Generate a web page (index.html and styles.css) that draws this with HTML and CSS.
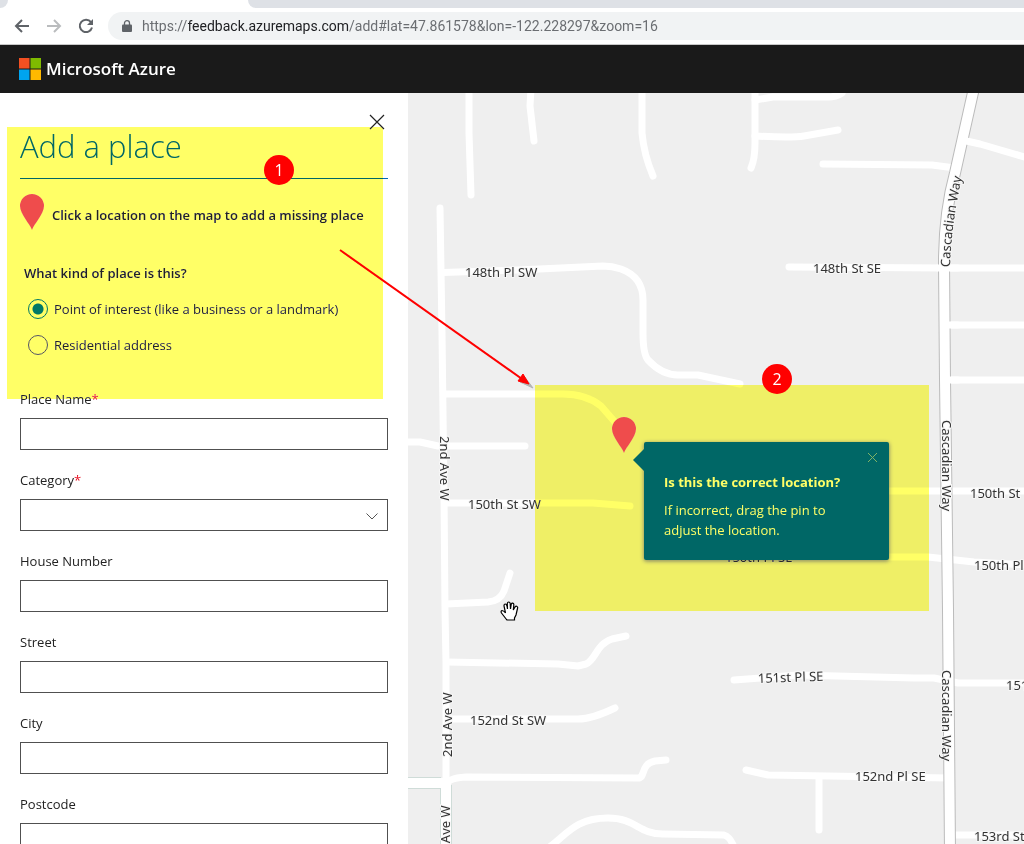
FILE: index.html
```
<!DOCTYPE html>
<html lang="en">
<head>
<meta charset="UTF-8">
<meta name="viewport" content="width=device-width, initial-scale=1.0">
<title>Azure Maps Feedback</title>
<link rel="stylesheet" href="styles.css">
</head>
<body>

<div class="browser">
    <div class="tabstrip">
        <span class="tab-before"></span>
        <span class="tab-current"></span>
        <span class="tab-after"></span>
    </div>
    <div class="toolbar">
        <button class="nav-button" aria-label="Back">
            <svg width="16" height="16" viewBox="0 0 16 16"><path d="M15 8H2M8 2L2 8l6 6"/></svg>
        </button>
        <button class="nav-button disabled" aria-label="Forward">
            <svg width="16" height="16" viewBox="0 0 16 16"><path d="M1 8h13M8 2l6 6-6 6"/></svg>
        </button>
        <button class="nav-button" aria-label="Reload">
            <svg width="16" height="16" viewBox="0 0 16 16"><path d="M13 4.200A6.200 6.200 0 1 0 14 9.500"/><path class="solid" d="M15 1v6H9z"/></svg>
        </button>
        <div class="address">
            <svg width="10" height="12" viewBox="0 0 10 12"><path d="M1 4.500h8q1 0 1 1V11q0 1-1 1H1q-1 0-1-1V5.500q0-1 1-1z" fill="#5f6368"/><path d="M2.500 5V3a2.500 2.300 0 0 1 5 0v2" fill="none" stroke="#5f6368" stroke-width="1.300"/></svg>
            <span class="url">https://<b>feedback.azuremaps.com</b>/add#lat=47.861578&amp;lon=-122.228297&amp;zoom=16</span>
        </div>
    </div>
</div>

<header class="brand">
    <svg width="22" height="22" viewBox="0 0 22 22">
        <rect width="10.500" height="10.500" fill="#f25022"/>
        <rect x="11.500" width="10.500" height="10.500" fill="#7fba00"/>
        <rect y="11.500" width="10.500" height="10.500" fill="#00a4ef"/>
        <rect x="11.500" y="11.500" width="10.500" height="10.500" fill="#ffb900"/>
    </svg>
    <span>Microsoft Azure</span>
</header>

<main class="content">
    <form class="panel">
        <button type="button" class="panel-close" aria-label="Close">
            <svg width="16" height="16" viewBox="0 0 16 16"><path d="M1 1l14 14M15 1L1 15" stroke="#222" stroke-width="1.200"/></svg>
        </button>
        <h1>Add a place</h1>

        <div class="hint">
            <svg width="24" height="36" viewBox="0 0 24 36"><path d="M12 36C10 30 0 20 0 12a12 12 0 0 1 24 0C24 20 14 30 12 36z" fill="#ef4c4c"/></svg>
            <span>Click a location on the map to add a missing place</span>
        </div>

        <fieldset class="kind">
            <legend>What kind of place is this?</legend>
            <label><input type="radio" name="kind" checked><span>Point of interest (like a business or a landmark)</span></label>
            <label><input type="radio" name="kind"><span>Residential address</span></label>
        </fieldset>

        <div class="field">
            <label for="name">Place Name<em>*</em></label>
            <input type="text" id="name">
        </div>
        <div class="field">
            <label for="category">Category<em>*</em></label>
            <div class="select">
                <select id="category"><option></option></select>
                <svg width="12" height="7" viewBox="0 0 12 7"><path d="M0.500 0.500L6 6l5.500-5.500" fill="none" stroke="#555"/></svg>
            </div>
        </div>
        <div class="field">
            <label for="house">House Number</label>
            <input type="text" id="house">
        </div>
        <div class="field">
            <label for="street">Street</label>
            <input type="text" id="street">
        </div>
        <div class="field">
            <label for="city">City</label>
            <input type="text" id="city">
        </div>
        <div class="field">
            <label for="postcode">Postcode</label>
            <input type="text" id="postcode">
        </div>
    </form>

    <section class="map">
        <svg class="roads" width="100%" height="100%">
            <!-- side streets, west half -->
            <g class="street">
                <path d="M61 -5V40L63 102"/>
                <path d="M123 -5L122 13L126 48"/>
                <path d="M234 -5V40Q236 62 245 83"/>
                <path d="M32 115L34 240L36 400L37 517L38 570V690"/>
                <path d="M35 179.500L110 177L195 173Q204 173 213 176Q235 184 235 207V240Q235 261 240 267Q254 282 270 282H290L332 291"/>
                <path d="M37 301H155Q178 301 193 313L206 328L214 336"/>
                <path d="M-5 349H12L30 353H117"/>
                <path d="M38 410H185L222 413"/>
                <path d="M38 511L80 509Q92 508 96 498L102 480"/>
                <path d="M39 569L150 571L170 573L178 571C188 567 188 551 204 546L218 543"/>
                <path d="M39 626H170Q184 626 207 615"/>
                <path d="M38 692Q40 685 58 684L230 685C238 685 232 671 247 668L258 667"/>
                <path d="M140 755C158 743 166 725 200 725C228 725 230 741 255 741L316 742Q323 744 327 757"/>
            </g>
            <!-- side streets, east half -->
            <g class="street">
                <path d="M347 -5V50Q347 66 343 75"/>
                <path d="M347 7L365 4H420Q428 4 434 0"/>
                <path d="M347 43Q384 45 396 43L430 37"/>
                <path d="M415 71L524 72L547 75"/>
                <path d="M381 174L536 175H1200"/>
                <path d="M538 232H1200"/>
                <path d="M538 287H1200"/>
                <path d="M240 398H1200"/>
                <path d="M240 464H520L566 469L620 472"/>
                <path d="M326 587L390 582L506 585H526L550 590H1200"/>
                <path d="M338 677L360 682L540 685"/>
                <path d="M411 685V737"/>
                <path d="M545 742H1200"/>
            </g>
            <!-- main roads: casing below, surface above -->
            <g class="casing">
                <path d="M566 -5L547 80Q536 120 536 170L537 287L540 517L542 760"/>
                <path class="green" d="M-5 690H33M38 692V760"/>
            </g>
            <g class="surface">
                <path d="M566 -5L547 80Q536 120 536 170L537 287L540 517L542 760"/>
                <path d="M-5 690H38V760"/>
            </g>
            <g class="street">
                <path d="M554 47L572 51L620 65"/>
                <path d="M530 175H550M540 232H550M540 287H550"/>
            </g>
            <g class="names">
                <text x="57" y="184">148th Pl SW</text>
                <text x="405" y="180">148th St SE</text>
                <text x="60" y="416">150th St SW</text>
                <text x="562" y="405">150th St</text>
                <text x="566" y="477">150th Pl</text>
                <text x="317" y="469">150th Pl SE</text>
                <text transform="translate(350 590) rotate(-2)">151st Pl SE</text>
                <text x="598" y="597">151</text>
                <text x="62" y="632">152nd St SW</text>
                <text x="447" y="688">152nd Pl SE</text>
                <text x="566" y="748">153rd St</text>
                <text transform="translate(32 343) rotate(90)">2nd Ave W</text>
                <text transform="translate(44 664) rotate(-90)">2nd Ave W</text>
                <text transform="translate(42 777) rotate(-90)">2nd Ave W</text>
                <text transform="translate(534 327) rotate(90)">Cascadian Way</text>
                <text transform="translate(534 577) rotate(90)">Cascadian Way</text>
                <path id="bend" d="M542 174Q543 130 557 70" fill="none" stroke="none"/>
                <text><textPath href="#bend">Cascadian Way</textPath></text>
            </g>
        </svg>

        <svg class="pin" width="24" height="36" viewBox="0 0 24 36"><path d="M12 36C10 30 0 20 0 12a12 12 0 0 1 24 0C24 20 14 30 12 36z" fill="#ef4c4c"/></svg>

        <div class="popup">
            <button type="button" class="popup-close" aria-label="Close">
                <svg width="9" height="9" viewBox="0 0 9 9"><path d="M0 0l9 9M9 0L0 9" stroke="#80b3dc"/></svg>
            </button>
            <h2>Is this the correct location?</h2>
            <p>If incorrect, drag the pin to adjust the location.</p>
        </div>

        <svg class="hand" width="19" height="20" viewBox="0 0 19 20"><path d="M6.500 18.500L1.500 12Q0.500 10 2 9.500Q3.500 9.500 5.500 12L4 5Q4 3 5.300 3Q6.500 3 7 5L7.500 8L7.300 2.500Q7.500 1 8.700 1Q10 1 10.200 2.500L10.500 8L11.300 3Q11.700 2 12.800 2.200Q14 2.500 13.800 4L13.300 9L15 6Q16 4.800 17 5.500Q18 6 17.500 7.500L16 14L14.500 17V19H7z" fill="#fff" stroke="#000" stroke-width="1.200"/></svg>
    </section>
</main>

<!-- tutorial marks -->
<div class="highlight highlight-form"></div>
<div class="highlight highlight-map"></div>
<svg class="arrow" width="200" height="145" viewBox="0 0 200 145">
    <g class="arrow-shadow"><path d="M2 2L184 130"/><path class="head" d="M193 138L180 132L184 126z"/></g>
    <g class="arrow-line"><path d="M0 0L182 129"/><path class="head" d="M189 134L178 131L183 124z"/></g>
</svg>
<span class="step step-one">1</span>
<span class="step step-two">2</span>

</body>
</html>
```
FILE: styles.css
```
* {
    box-sizing: border-box;
}
body {
    margin: 0;
    height: 100vh;
    display: flex;
    flex-direction: column;
    position: relative;
    overflow: hidden;
    background-color: #fff;
    color: #222;
    font-family: "Open Sans", "Noto Sans", sans-serif;
    font-size: 13px;
    line-height: 20px;
}
button {
    border: none;
    padding: 0;
    background: none;
    cursor: pointer;
}
svg {
    display: block;
    flex: none;
}

/* Browser bar */
.browser {
    border-bottom: 1px solid #c8c8c8;
}
.tabstrip {
    display: flex;
    height: 8px;
}
.tab-before {
    width: 8px;
    background-color: #dee1e6;
    border-radius: 0 0 8px 0;
}
.tab-current {
    width: 240px;
}
.tab-after {
    flex: 1;
    background-color: #dee1e6;
    border-radius: 0 0 0 8px;
}
.toolbar {
    display: flex;
    align-items: center;
    gap: 16px;
    height: 36px;
    padding-left: 14px;
}
.nav-button svg {
    fill: none;
    stroke: #5f6368;
    stroke-width: 2;
}
.nav-button .solid {
    fill: #5f6368;
    stroke: none;
}
.nav-button.disabled svg {
    stroke: #babcbe;
}
.address {
    flex: 1;
    display: flex;
    align-items: center;
    gap: 10px;
    height: 28px;
    margin-left: -2px;
    padding-left: 14px;
    background-color: #f1f3f4;
    border-radius: 14px 0 0 14px;
}
.url {
    color: #6b6e72;
    font-family: Roboto, sans-serif;
    font-size: 14px;
    white-space: nowrap;
}
.url b {
    color: #202124;
    font-weight: 400;
}

/* Azure header */
.brand {
    display: flex;
    align-items: center;
    gap: 5px;
    height: 48px;
    flex: none;
    padding-left: 19px;
    background-color: #1a1a1a;
    color: #fff;
    font-size: 17px;
    font-weight: 600;
}

.content {
    display: flex;
    flex: 1;
    min-height: 0;
}

/* Form */
.panel {
    width: 408px;
    flex: none;
    padding: 0 20px;
    overflow: hidden;
    position: relative;
}
.panel-close {
    position: absolute;
    top: 21px;
    right: 23px;
}
h1 {
    margin: 0 0 15px;
    padding: 31px 0 9px;
    border-bottom: 1px solid #0067b8;
    color: #0067b8;
    font-size: 31px;
    font-weight: 300;
    line-height: 45px;
}
.hint {
    display: flex;
    align-items: center;
    gap: 8px;
    font-weight: 600;
}
.hint span {
    padding-top: 5px;
}
.kind {
    margin: 33px 0 34px;
    border: none;
    padding: 0 4px;
}
.kind legend {
    padding: 0;
    font-weight: 600;
}
.kind label {
    display: flex;
    align-items: center;
    gap: 6px;
    height: 20px;
    margin: 16px 0 0 4px;
}
.kind input {
    appearance: none;
    width: 20px;
    height: 20px;
    margin: 0;
    border: 1px solid #555;
    border-radius: 50%;
}
.kind input:checked {
    border-color: #0078d4;
    background: radial-gradient(circle, #0078d4 5px, transparent 6px);
}
.field {
    margin-bottom: 20px;
}
.field label {
    display: block;
    margin-bottom: 9px;
}
.field em {
    color: #e81123;
    font-style: normal;
}
.field input,
.field select {
    display: block;
    width: 100%;
    height: 32px;
    padding: 0 10px;
    appearance: none;
    border: 1px solid #505050;
    border-radius: 0;
    background-color: #fff;
    font: inherit;
}
.select {
    position: relative;
}
.select svg {
    position: absolute;
    top: 14px;
    right: 10px;
    pointer-events: none;
}

/* Map */
.map {
    flex: 1;
    min-width: 0;
    position: relative;
    overflow: hidden;
    background-color: #efefef;
}
.street {
    fill: none;
    stroke: #fff;
    stroke-width: 7;
    stroke-linecap: round;
    stroke-linejoin: round;
}
.casing {
    fill: none;
    stroke: #bbb;
    stroke-width: 12;
}
.casing .green {
    stroke: #cfdcd8;
}
.surface {
    fill: none;
    stroke: #fff;
    stroke-width: 10;
}
.names {
    fill: #333;
    stroke: #f7f7f7;
    stroke-width: 2;
    paint-order: stroke;
    font-family: "Noto Sans", sans-serif;
    font-size: 13px;
}
.pin {
    position: absolute;
    left: 204px;
    top: 324px;
}
.popup {
    position: absolute;
    left: 236px;
    top: 349px;
    width: 245px;
    padding: 30px 40px 20px 20px;
    background-color: #0067b8;
    color: #fff;
    border-radius: 2px;
    box-shadow: 0 1px 4px rgba(0, 0, 0, 0.5);
}
.popup::before {
    content: "";
    position: absolute;
    left: -11px;
    top: 7px;
    border: 11px solid transparent;
    border-left: none;
    border-right-color: #0067b8;
}
.popup h2 {
    margin: 0 0 8px;
    font-size: 13px;
    font-weight: 700;
    line-height: 20px;
    white-space: nowrap;
}
.popup p {
    margin: 0;
}
.popup-close {
    position: absolute;
    top: 11px;
    right: 12px;
}
.hand {
    position: absolute;
    left: 92px;
    top: 508px;
}

/* Tutorial marks */
.highlight {
    position: absolute;
    background-color: #ffff66;
    mix-blend-mode: darken;
    pointer-events: none;
}
.highlight-form {
    left: 7px;
    top: 127px;
    width: 376px;
    height: 272px;
}
.highlight-map {
    left: 535px;
    top: 385px;
    width: 394px;
    height: 226px;
}
.arrow {
    position: absolute;
    left: 340px;
    top: 250px;
    overflow: visible;
    pointer-events: none;
}
.arrow-line {
    stroke: #f00;
    stroke-width: 2;
}
.arrow-line .head {
    fill: #f00;
    stroke-width: 1;
}
.arrow-shadow {
    stroke: #000;
    stroke-width: 1;
    opacity: 0.25;
}
.step {
    position: absolute;
    width: 30px;
    height: 30px;
    border-radius: 50%;
    background-color: #f00;
    color: #fff;
    font-size: 16px;
    line-height: 30px;
    text-align: center;
}
.step-one {
    left: 264px;
    top: 155px;
}
.step-two {
    left: 762px;
    top: 364px;
}
```
